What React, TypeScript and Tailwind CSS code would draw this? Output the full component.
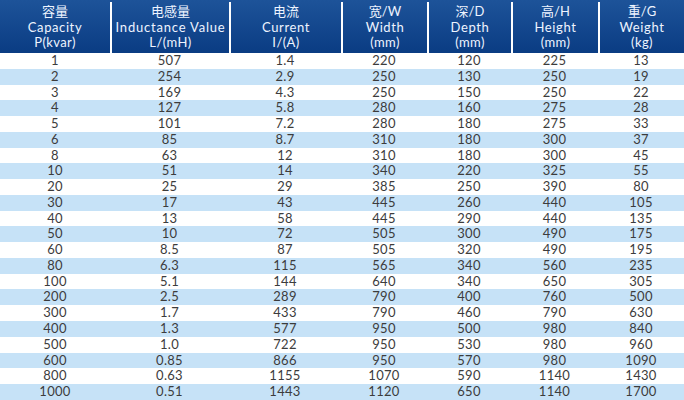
import React from 'react';

const headers = [
  ['容量', 'Capacity', 'P(kvar)'],
  ['电感量', 'Inductance Value', 'L/(mH)'],
  ['电流', 'Current', 'I/(A)'],
  ['宽/W', 'Width', '(mm)'],
  ['深/D', 'Depth', '(mm)'],
  ['高/H', 'Height', '(mm)'],
  ['重/G', 'Weight', '(kg)'],
];

const rows = [
  ['1', '507', '1.4', '220', '120', '225', '13'],
  ['2', '254', '2.9', '250', '130', '250', '19'],
  ['3', '169', '4.3', '250', '150', '250', '22'],
  ['4', '127', '5.8', '280', '160', '275', '28'],
  ['5', '101', '7.2', '280', '180', '275', '33'],
  ['6', '85', '8.7', '310', '180', '300', '37'],
  ['8', '63', '12', '310', '180', '300', '45'],
  ['10', '51', '14', '340', '220', '325', '55'],
  ['20', '25', '29', '385', '250', '390', '80'],
  ['30', '17', '43', '445', '260', '440', '105'],
  ['40', '13', '58', '445', '290', '440', '135'],
  ['50', '10', '72', '505', '300', '490', '175'],
  ['60', '8.5', '87', '505', '320', '490', '195'],
  ['80', '6.3', '115', '565', '340', '560', '235'],
  ['100', '5.1', '144', '640', '340', '650', '305'],
  ['200', '2.5', '289', '790', '400', '760', '500'],
  ['300', '1.7', '433', '790', '460', '790', '630'],
  ['400', '1.3', '577', '950', '500', '980', '840'],
  ['500', '1.0', '722', '950', '530', '980', '960'],
  ['600', '0.85', '866', '950', '570', '980', '1090'],
  ['800', '0.63', '1155', '1070', '590', '1140', '1430'],
  ['1000', '0.51', '1443', '1120', '650', '1140', '1700'],
];

const cols = 'grid grid-cols-[110px_119px_112px_86px_84px_87px_86px]';

export default function App() {
  return (
    <div className="w-[684px] h-[400px] overflow-hidden bg-white" style={{ fontFamily: 'Lato, "Noto Sans CJK SC", sans-serif' }}>
      <div className={`${cols} h-[53px] pt-[2px] bg-gradient-to-b from-[#1d5399] to-[#0a3c83] text-[#eef4ff] text-[13px] leading-[15.5px]`}>
        {headers.map((h, i) => (
          <div key={i} className={`flex flex-col items-center justify-center ${i > 0 ? 'border-l-2 border-white' : ''}`}>
            <span>{h[0]}</span>
            <span className={i === 1 ? 'tracking-[0.8px]' : 'tracking-[0.6px]'}>{h[1]}</span>
            <span className="tracking-[0.4px]">{h[2]}</span>
          </div>
        ))}
      </div>
      {rows.map((r, ri) => (
        <div key={ri} className={`${cols} h-[15.77px] text-[13px] leading-[15.77px] text-[#3c3c3c] ${ri % 2 === 1 ? 'bg-[#c6e2f7]' : 'bg-white'}`}>
          {r.map((c, ci) => (
            <div key={ci} className="text-center tracking-[0.3px]">{c}</div>
          ))}
        </div>
      ))}
    </div>
  );
}
